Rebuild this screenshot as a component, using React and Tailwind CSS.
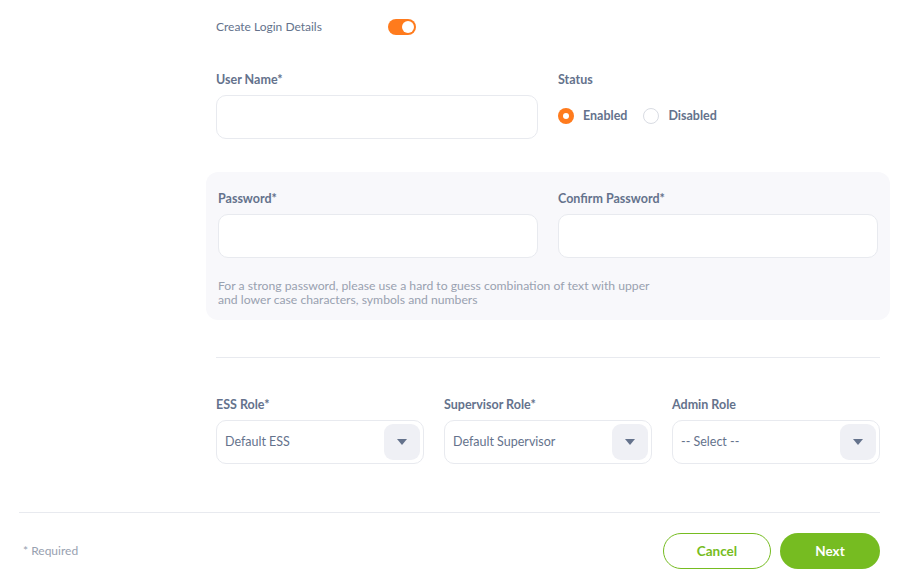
import React from 'react';

const font = { fontFamily: 'Lato, "Noto Sans", sans-serif' };

function Label({ children }) {
  return <div className="text-[12.5px] leading-4 font-bold text-[#64728c]">{children}</div>;
}

function TextInput() {
  return <div className="h-[44px] rounded-[10px] border border-[#e8eaef] bg-white" />;
}

function Radio({ checked, label }) {
  return (
    <label className="flex items-center gap-[9px]">
      {checked ? (
        <span className="w-4 h-4 rounded-full bg-[#ff7b1d] flex items-center justify-center">
          <span className="w-[6px] h-[6px] rounded-full bg-white" />
        </span>
      ) : (
        <span className="w-4 h-4 rounded-full border border-[#d9dce3] bg-white" />
      )}
      <span className="text-[12.5px] font-bold text-[#64728c]">{label}</span>
    </label>
  );
}

function Select({ label, value }) {
  return (
    <div>
      <div className="mb-[7px]">
        <Label>{label}</Label>
      </div>
      <div className="h-[44px] rounded-[10px] border border-[#e8eaef] bg-white flex items-center justify-between pl-2 pr-[3px]">
        <span className="text-[12.5px] text-[#64728c]">{value}</span>
        <span className="w-9 h-9 rounded-[9px] bg-[#eff0f5] flex items-center justify-center">
          <svg width="10" height="6" viewBox="0 0 10 6">
            <path d="M0 0 H10 L5 6 Z" fill="#64728c" />
          </svg>
        </span>
      </div>
    </div>
  );
}

export default function App() {
  return (
    <div className="w-[899px] h-[575px] bg-white overflow-hidden" style={font}>
      <div className="pl-[216px] pr-[19px]">
        {/* login toggle */}
        <div className="flex items-center mt-[19px] h-4">
          <span className="w-[172px] text-[12px] text-[#64728c]">Create Login Details</span>
          <span className="w-[28px] h-4 rounded-full bg-[#ff7b1d] flex items-center justify-end pr-[2px]">
            <span className="w-3 h-3 rounded-full bg-white" />
          </span>
        </div>

        {/* user name + status */}
        <div className="grid grid-cols-2 gap-5 mt-[37px]">
          <div>
            <div className="mb-[7px]">
              <Label>User Name*</Label>
            </div>
            <TextInput />
          </div>
          <div>
            <div className="mb-[7px]">
              <Label>Status</Label>
            </div>
            <div className="flex items-center gap-4 h-[42px]">
              <Radio checked label="Enabled" />
              <Radio label="Disabled" />
            </div>
          </div>
        </div>

        {/* password panel */}
        <div className="mt-[33px] -mx-[10px] rounded-[12px] bg-[#f8f8fb] px-3 pt-[19px] pb-[13px]">
          <div className="grid grid-cols-2 gap-5">
            <div>
              <div className="mb-[7px]">
                <Label>Password*</Label>
              </div>
              <TextInput />
            </div>
            <div>
              <div className="mb-[7px]">
                <Label>Confirm Password*</Label>
              </div>
              <TextInput />
            </div>
          </div>
          <p className="mt-[21px] text-[12.2px] leading-[14px] text-[#98a1b0]">
            For a strong password, please use a hard to guess combination of text with upper
            <br />
            and lower case characters, symbols and numbers
          </p>
        </div>

        <hr className="mt-[37px] border-0 border-t border-[#e8eaef]" />

        {/* roles */}
        <div className="grid grid-cols-3 gap-5 mt-[39px]">
          <Select label="ESS Role*" value="Default ESS" />
          <Select label="Supervisor Role*" value="Default Supervisor" />
          <Select label="Admin Role" value="-- Select --" />
        </div>
      </div>

      {/* footer */}
      <div className="pl-[19px] pr-[19px] mt-[48px]">
        <div className="border-t border-[#e8eaef]" />
        <div className="flex items-center justify-between mt-5">
          <span className="pl-1 text-[12px] text-[#98a1b0]">* Required</span>
          <div className="flex items-center gap-[9px]">
            <button className="w-[108px] h-9 rounded-full border border-[#76bc21] bg-white text-[13.5px] font-bold text-[#76bc21]">
              Cancel
            </button>
            <button className="w-[100px] h-9 rounded-full bg-[#76bc21] text-[13.5px] font-bold text-white">
              Next
            </button>
          </div>
        </div>
      </div>
    </div>
  );
}
